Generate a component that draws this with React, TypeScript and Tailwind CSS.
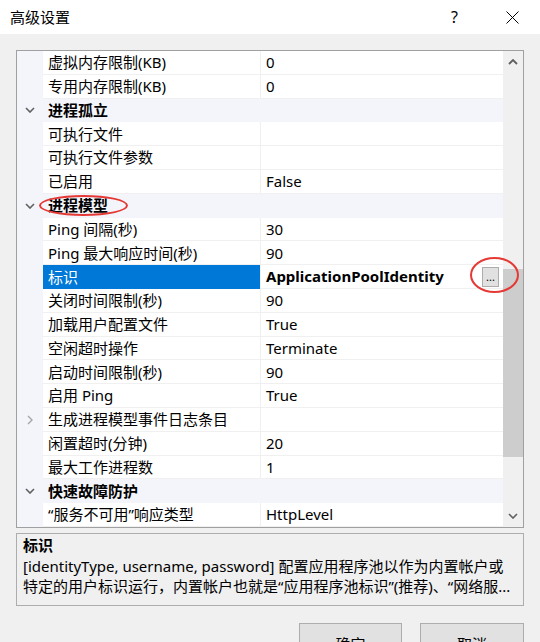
import React from "react";

type Row =
  | { kind: "cat"; label: string }
  | {
      kind: "item";
      label: string;
      value?: string;
      selected?: boolean;
      expandable?: boolean;
    };

const ROWS: Row[] = [
  { kind: "item", label: "虚拟内存限制(KB)", value: "0" },
  { kind: "item", label: "专用内存限制(KB)", value: "0" },
  { kind: "cat", label: "进程孤立" },
  { kind: "item", label: "可执行文件" },
  { kind: "item", label: "可执行文件参数" },
  { kind: "item", label: "已启用", value: "False" },
  { kind: "cat", label: "进程模型" },
  { kind: "item", label: "Ping 间隔(秒)", value: "30" },
  { kind: "item", label: "Ping 最大响应时间(秒)", value: "90" },
  { kind: "item", label: "标识", value: "ApplicationPoolIdentity", selected: true },
  { kind: "item", label: "关闭时间限制(秒)", value: "90" },
  { kind: "item", label: "加载用户配置文件", value: "True" },
  { kind: "item", label: "空闲超时操作", value: "Terminate" },
  { kind: "item", label: "启动时间限制(秒)", value: "90" },
  { kind: "item", label: "启用 Ping", value: "True" },
  { kind: "item", label: "生成进程模型事件日志条目", expandable: true },
  { kind: "item", label: "闲置超时(分钟)", value: "20" },
  { kind: "item", label: "最大工作进程数", value: "1" },
  { kind: "cat", label: "快速故障防护" },
  { kind: "item", label: "“服务不可用”响应类型", value: "HttpLevel" },
];

const ChevronDown = ({ color = "#606060" }: { color?: string }) => (
  <svg width="10" height="6" viewBox="0 0 10 6">
    <path d="M1 1 L5 5 L9 1" fill="none" stroke={color} strokeWidth="1.6" />
  </svg>
);

const ChevronRight = () => (
  <svg width="6" height="10" viewBox="0 0 6 10">
    <path d="M1 1 L5 5 L1 9" fill="none" stroke="#a6a6a6" strokeWidth="1.4" />
  </svg>
);

const GridRow = ({ row }: { row: Row }) => {
  if (row.kind === "cat") {
    return (
      <div className="flex h-[23.8px] items-center bg-[#f3f5fa]">
        <div className="flex w-[26px] justify-center">
          <ChevronDown />
        </div>
        <span className="pl-[5px] font-bold">{row.label}</span>
      </div>
    );
  }
  return (
    <div className="flex h-[23.8px]">
      <div className="flex w-[26px] shrink-0 items-center justify-center bg-[#f3f5fa]">
        {row.expandable && <ChevronRight />}
      </div>
      <div
        className={
          row.selected
            ? "flex w-[218px] shrink-0 items-center border-r border-[#f0f0f0] bg-[#0078d7] pl-[5px] text-white"
            : "flex w-[218px] shrink-0 items-center border-r border-b border-[#f0f0f0] bg-white pl-[5px]"
        }
      >
        <span className="whitespace-nowrap">{row.label}</span>
      </div>
      <div className="flex flex-1 items-center border-b border-[#f0f0f0] bg-white pl-[5px] pr-[4px]">
        <span
          className={row.selected ? "whitespace-nowrap font-bold" : "whitespace-nowrap"}
        >
          {row.value}
        </span>
        {row.selected && (
          <div className="ml-auto flex h-[20px] w-[17px] items-center justify-center border border-[#adadad] bg-[#e1e1e1] text-[11px] leading-none">
            ...
          </div>
        )}
      </div>
    </div>
  );
};

export default function App() {
  return (
    <div className="relative h-[642px] w-[540px] overflow-hidden bg-[#f0f0f0] font-['Noto_Sans','Noto_Sans_CJK_SC',sans-serif] text-[15px] text-black">
      {/* title bar */}
      <div className="flex h-[34px] items-center bg-white pl-[10px]">
        <span>高级设置</span>
        <span className="ml-auto mr-[48px] text-[16px]">?</span>
        <svg width="13" height="13" viewBox="0 0 13 13" className="mr-[21px]">
          <path d="M0.5 0.5 L12.5 12.5 M12.5 0.5 L0.5 12.5" stroke="#000" strokeWidth="1" />
        </svg>
      </div>

      <div className="px-[16px] pt-[16px]">
        {/* property grid */}
        <div className="flex h-[478px] border border-[#a0a0a0] bg-white">
          <div className="flex-1">
            {ROWS.map((r, i) => (
              <GridRow key={i} row={r} />
            ))}
          </div>
          <div className="flex w-[20px] flex-col bg-[#f0f0f0]">
            <div className="flex h-[22px] items-center justify-center">
              <svg width="10" height="6" viewBox="0 0 10 6">
                <path d="M1 5 L5 1 L9 5" fill="none" stroke="#606060" strokeWidth="1.8" />
              </svg>
            </div>
            <div className="mt-[196px] h-[188px] bg-[#cdcdcd]" />
            <div className="mt-auto flex h-[22px] items-center justify-center">
              <ChevronDown />
            </div>
          </div>
        </div>

        {/* description */}
        <div className="mt-[5px] h-[73px] border border-[#adadad] px-[6px] pt-[1px] leading-[20.5px]">
          <div className="font-bold">标识</div>
          <div className="whitespace-nowrap">
            [identityType, username, password] 配置应用程序池以作为内置帐户或
          </div>
          <div className="whitespace-nowrap">
            特定的用户标识运行，内置帐户也就是“应用程序池标识”(推荐)、“网络服...
          </div>
        </div>

        {/* buttons (cut off by the window edge, as in the screenshot) */}
        <div className="mt-[17px] flex justify-end gap-[18px]">
          <button className="h-[36px] w-[103px] border border-[#adadad] bg-[#e1e1e1] pt-[7px] text-[15px] leading-none">
            确定
          </button>
          <button className="h-[36px] w-[104px] border border-[#adadad] bg-[#e1e1e1] pt-[7px] text-[15px] leading-none">
            取消
          </button>
        </div>
      </div>

      {/* red annotation ellipses */}
      <div className="absolute left-[39px] top-[195px] h-[21px] w-[89px] rounded-[50%] border-2 border-[#e53935]" />
      <div className="absolute left-[470px] top-[257px] h-[36px] w-[49px] rounded-[50%] border-2 border-[#e53935]" />
    </div>
  );
}
